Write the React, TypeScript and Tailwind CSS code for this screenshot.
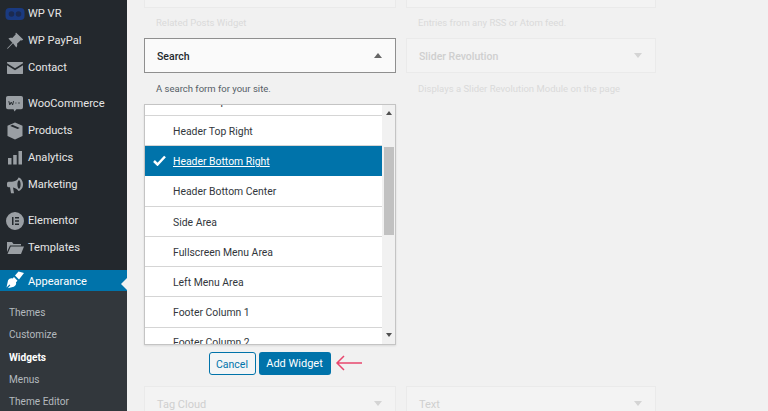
import type { ReactNode } from "react";

const font = "font-['Roboto','Noto_Sans',sans-serif]";

type MenuItem = { label: string; icon: ReactNode };

const Svg = ({ children, size = 20 }: { children: ReactNode; size?: number }) => (
  <svg width={size} height={size} viewBox="0 0 20 20" fill="currentColor">
    {children}
  </svg>
);

const PinIcon = () => (
  <Svg>
    <path d="M11.2 1.8l7 6.6-1.3 1.2-1.2-.3-3.700 3.400c.5 1.500.2 2.900-.7 3.800L8 12.300 3 17.500l-1 .5.400-1.100 5-5.200-4-4.100c1-.9 2.400-1.200 3.900-.7l3.500-3.600-.4-1.300z" />
  </Svg>
);

const menuGroups: MenuItem[][] = [
  [
    {
      label: "WP VR",
      icon: (
        <svg width="20" height="14" viewBox="0 0 20 14">
          <rect x="0.500" y="1" width="19" height="12" rx="4" fill="#1a3a80" />
          <circle cx="6.500" cy="7" r="2.800" fill="#1b2a50" />
          <circle cx="13.500" cy="7" r="2.800" fill="#1b2a50" />
        </svg>
      ),
    },
    { label: "WP PayPal", icon: <PinIcon /> },
    {
      label: "Contact",
      icon: (
        <Svg>
          <path d="M2.500 4h15c.3 0 .5.200.5.500v.7l-8 5-8-5v-.7c0-.3.200-.5.500-.5zM2 7.200l8 5 8-5v8.300c0 .3-.2.500-.5.500h-15c-.3 0-.5-.2-.5-.5z" />
        </Svg>
      ),
    },
  ],
  [
    {
      label: "WooCommerce",
      icon: (
        <svg width="17" height="17" viewBox="0 0 18 18">
          <path
            d="M2 1h14a2 2 0 0 1 2 2v10a2 2 0 0 1-2 2h-5l-2 2.500L8 15H2a2 2 0 0 1-2-2V3a2 2 0 0 1 2-2z"
            fill="currentColor"
          />
          <path d="M3 6.500l1 4 1.500-3 1.500 3 1-4M10 8.500h1M13 8.500h1.500" stroke="#23282d" strokeWidth="1" fill="none" />
        </svg>
      ),
    },
    {
      label: "Products",
      icon: (
        <Svg>
          <path d="M10 1.500l7.500 3.200v10.400L10 18.500l-7.500-3.400V4.700zM5.200 4.900l7.400 3 2.100-1-7.300-3.100z" fillRule="evenodd" />
        </Svg>
      ),
    },
    {
      label: "Analytics",
      icon: (
        <Svg>
          <path d="M3 10h3.500v6.500H3zM8.200 7h3.500v9.500H8.200zM13.500 3H17v13.500h-3.500z" />
        </Svg>
      ),
    },
    {
      label: "Marketing",
      icon: (
        <Svg>
          <path d="M18 9.500c0-3.400-2-6.500-4.500-7-.8 2.500-3.300 4-6.500 4.300H3.500C2.700 6.800 2 7.500 2 8.500v2c0 1 .7 1.700 1.500 1.700H5l1 6h3l-1-5.800c2.300.3 4.300 1.500 5.500 3.600 2.500-.5 4.500-3.100 4.500-6.500zm-4 4.200c-.8 0-1.600-1.800-1.600-4.200s.8-4.200 1.600-4.200 1.600 1.800 1.600 4.200-.8 4.200-1.600 4.200z" />
        </Svg>
      ),
    },
  ],
  [
    {
      label: "Elementor",
      icon: (
        <Svg>
          <path d="M10 1a9 9 0 1 0 0 18 9 9 0 0 0 0-18zM7 6h1.500v8H7zm3 0h4v1.500h-4zm0 3.250h4v1.500h-4zm0 3.250h4V14h-4z" fillRule="evenodd" />
        </Svg>
      ),
    },
    {
      label: "Templates",
      icon: (
        <Svg>
          <path d="M2 4h5l1.500 2H16v1.500H5L2 14zM5.700 8.500H19l-3 7.500H2.500z" />
        </Svg>
      ),
    },
  ],
];

const subItems = ["Themes", "Customize", "Widgets", "Menus", "Theme Editor"];

const areas = [
  "Header Top Center",
  "Header Top Right",
  "Header Bottom Right",
  "Header Bottom Center",
  "Side Area",
  "Fullscreen Menu Area",
  "Left Menu Area",
  "Footer Column 1",
  "Footer Column 2",
];

const Sidebar = () => (
  <aside className="flex w-[127px] shrink-0 flex-col bg-[#23282d] text-[11.100px] text-[#e6e6e6]">
    {menuGroups.map((group) => (
      <div key={group[0].label} className="mb-[9px] last:mb-2">
        {group.map((item) => (
          <div key={item.label} className="flex h-[27px] items-center">
            <span className="flex w-[28px] justify-center pl-px text-[#9a9fa4]">{item.icon}</span>
            <span className="pt-[2px]">{item.label}</span>
          </div>
        ))}
      </div>
    ))}
    <div className="relative flex h-[27px] items-center bg-[#0073aa] text-white">
      <span className="flex w-[28px] justify-center pl-px">
        <Svg>
          <path d="M19 3l-5.500-1.500-3.500 4 4 4zM9 7L7.500 8.500C6 8 4 8.500 3 10.500L1.500 17.500l3-3 .8.800-2.500 3 6-1.500c2-1 2.700-3 2.200-4.500l1.500-1.500z" />
        </Svg>
      </span>
      <span className="pt-[4px]">Appearance</span>
      <span className="absolute right-0 top-[8px] h-0 w-0 border-y-[6px] border-r-[6px] border-y-transparent border-r-[#f1f1f1]" />
    </div>
    <div className="flex-1 bg-[#32373c] pt-[9px] text-[10.100px] text-[#b4b9be]">
      {subItems.map((item) => (
        <div
          key={item}
          className={`flex h-[22.400px] items-center pl-[9px] pt-[3px] ${item === "Widgets" ? "font-bold text-white" : ""}`}
        >
          {item}
        </div>
      ))}
    </div>
  </aside>
);

const FadedCard = ({ title, bold }: { title: string; bold?: boolean }) => (
  <div className="flex h-[35px] items-center justify-between border border-[#eaeaea] bg-[#f3f3f3] pl-3 pr-[13px]">
    <span className={`pt-[3px] ${bold ? "text-[10.500px] font-medium" : "text-[11px]"} text-[#cfcfcf]`}>{title}</span>
    <span className="h-0 w-0 border-x-[4px] border-t-[5px] border-x-transparent border-t-[#d4d4d4]" />
  </div>
);

const FadedText = ({ children }: { children: string }) => (
  <p className="pl-3 pt-px text-[9.500px] text-[#dadada]">{children}</p>
);

const Chooser = () => (
  <div className="flex h-[241px] overflow-hidden border border-[#c4c4c4] bg-white shadow-[0_1px_2px_rgba(0,0,0,0.1)]">
    <ul className="mt-[-19px] flex-1">
      {areas.map((area) => {
        const selected = area === "Header Bottom Right";
        return (
          <li
            key={area}
            className={`flex h-[30.200px] shrink-0 items-center border-b text-[10.400px] ${
              selected ? "border-white bg-[#0073aa] text-white" : "border-[#d5d5d5] text-[#32373c]"
            }`}
          >
            <span className="flex w-[28px] justify-center">
              {selected && (
                <svg width="13" height="11" viewBox="0 0 13 11" fill="none" stroke="white" strokeWidth="2.500">
                  <path d="M1 6l3.500 3.500L12 1.500" />
                </svg>
              )}
            </span>
            <span className={`pt-[2px] ${selected ? "underline" : ""}`}>{area}</span>
          </li>
        );
      })}
    </ul>
    <div className="flex w-[13px] shrink-0 flex-col items-center bg-[#f1f1f1]">
      <span className="mt-[6px] h-0 w-0 border-x-[3px] border-b-[4px] border-x-transparent border-b-[#505050]" />
      <span className="mt-[32px] h-[88px] w-[10px] bg-[#c1c1c1]" />
      <span className="mt-auto mb-[7px] h-0 w-0 border-x-[3px] border-t-[4px] border-x-transparent border-t-[#505050]" />
    </div>
  </div>
);

const Main = () => (
  <main className="grid flex-1 grid-cols-[252px_250px] content-start gap-x-[10px] pl-[17px]">
    <div className="flex flex-col">
      <div className="h-[8px] border border-t-0 border-[#eaeaea] bg-[#f3f3f3]" />
      <div className="flex h-[30px] items-center">
        <FadedText>Related Posts Widget</FadedText>
      </div>
      <div className="flex h-[35px] items-center justify-between border border-[#8f8f8f] bg-[#fafafa] pl-3 pr-[13px]">
        <span className="pt-[3px] text-[10.500px] font-medium text-[#23282d]">Search</span>
        <span className="h-0 w-0 border-x-[4px] border-b-[5px] border-x-transparent border-b-[#666666]" />
      </div>
      <div className="flex h-[31px] items-center pl-3 pt-px text-[9.500px] text-[#555d66]">A search form for your site.</div>
      <Chooser />
      <div className="mt-[7px] flex h-[23px] justify-center gap-[3px] pr-px text-[11px]">
        <button className="w-[47px] rounded-[3px] border border-[#0073aa] bg-[#f3f5f6] pt-[2px] text-[10.500px] text-[#0073aa]">Cancel</button>
        <div className="relative">
          <button className="h-[23px] w-[72px] rounded-[3px] bg-[#0073aa] pt-[2px] text-white">Add Widget</button>
          <svg className="absolute left-[76px] top-[2px]" width="28" height="18" viewBox="0 0 28 18" fill="none" stroke="#e8476e" strokeWidth="1.500">
            <path d="M27 9H2M9 2L2 9l7 7" />
          </svg>
        </div>
      </div>
      <div className="mt-[11px]">
        <FadedCard title="Tag Cloud" />
      </div>
    </div>
    <div className="flex flex-col">
      <div className="h-[8px] border border-t-0 border-[#eaeaea] bg-[#f3f3f3]" />
      <div className="flex h-[30px] items-center">
        <FadedText>Entries from any RSS or Atom feed.</FadedText>
      </div>
      <FadedCard title="Slider Revolution" bold />
      <div className="flex h-[31px] items-center">
        <FadedText>Displays a Slider Revolution Module on the page</FadedText>
      </div>
      <div className="mt-auto">
        <FadedCard title="Text" />
      </div>
    </div>
  </main>
);

export default function App() {
  return (
    <div className={`flex h-[411px] w-[768px] overflow-hidden bg-[#f1f1f1] ${font}`}>
      <Sidebar />
      <Main />
    </div>
  );
}
